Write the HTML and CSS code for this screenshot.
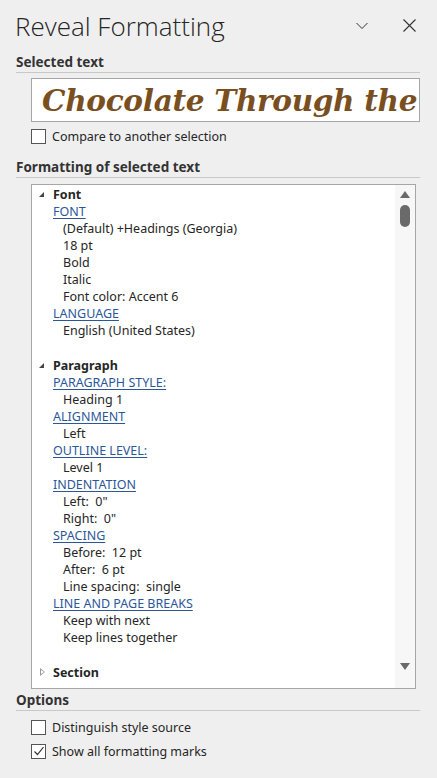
FILE: index.html
```html
<!DOCTYPE html>
<html lang="en">
<head>
    <meta charset="UTF-8">
    <meta name="viewport" content="width=device-width, initial-scale=1.0">
    <title>Reveal Formatting</title>
    <link rel="stylesheet" href="styles.css">
</head>
<body>
    <div class="pane">
        <div class="pane-header">
            <h1>Reveal Formatting</h1>
            <div class="pane-actions">
                <button class="icon-btn" aria-label="Options">
                    <svg width="12" height="8" viewBox="0 0 12 8"><path d="M0.5 1 L6 6.5 L11.5 1" fill="none" stroke="#333" stroke-width="1"/></svg>
                </button>
                <button class="icon-btn" aria-label="Close">
                    <svg width="13" height="13" viewBox="0 0 13 13"><path d="M0.5 0.5 L12.5 12.5 M12.5 0.5 L0.5 12.5" fill="none" stroke="#333" stroke-width="1.1"/></svg>
                </button>
            </div>
        </div>

        <h2 class="section-title">Selected text</h2>
        <div class="sample-box">
            <div class="sample-text">Chocolate Through the Years</div>
        </div>
        <label class="check">
            <span class="box"></span>
            Compare to another selection
        </label>

        <h2 class="section-title">Formatting of selected text</h2>
        <div class="tree-box">
            <div class="tree">
                <div class="group open">Font</div>
                <a class="prop" href="#">FONT</a>
                <div class="val">(Default) +Headings (Georgia)</div>
                <div class="val">18 pt</div>
                <div class="val">Bold</div>
                <div class="val">Italic</div>
                <div class="val">Font color: Accent 6</div>
                <a class="prop" href="#">LANGUAGE</a>
                <div class="val">English (United States)</div>
                <div class="blank"></div>

                <div class="group open">Paragraph</div>
                <a class="prop" href="#">PARAGRAPH STYLE:</a>
                <div class="val">Heading 1</div>
                <a class="prop" href="#">ALIGNMENT</a>
                <div class="val">Left</div>
                <a class="prop" href="#">OUTLINE LEVEL:</a>
                <div class="val">Level 1</div>
                <a class="prop" href="#">INDENTATION</a>
                <div class="val">Left:&nbsp; 0"</div>
                <div class="val">Right:&nbsp; 0"</div>
                <a class="prop" href="#">SPACING</a>
                <div class="val">Before:&nbsp; 12 pt</div>
                <div class="val">After:&nbsp; 6 pt</div>
                <div class="val">Line spacing:&nbsp; single</div>
                <a class="prop" href="#">LINE AND PAGE BREAKS</a>
                <div class="val">Keep with next</div>
                <div class="val">Keep lines together</div>
                <div class="blank"></div>

                <div class="group closed">Section</div>
            </div>
            <div class="scrollbar">
                <span class="arrow up"></span>
                <span class="thumb"></span>
                <span class="track"></span>
                <span class="arrow down"></span>
            </div>
        </div>

        <h2 class="section-title">Options</h2>
        <label class="check">
            <span class="box"></span>
            Distinguish style source
        </label>
        <label class="check">
            <span class="box checked">
                <svg width="12" height="12" viewBox="0 0 12 12"><path d="M1.5 6.5 L4.5 9.5 L10.5 2" fill="none" stroke="#333" stroke-width="1.2"/></svg>
            </span>
            Show all formatting marks
        </label>
    </div>
</body>
</html>
```

FILE: styles.css
```css
body {
    margin: 0;
    padding: 0;
    background-color: #efefef;
    font-family: "Noto Sans", "Open Sans", sans-serif;
    font-size: 12.5px;
    color: #262626;
}

.pane {
    padding: 0 17px 0 16px;
}

.pane-header {
    display: flex;
    align-items: center;
    justify-content: space-between;
    height: 51px;
}

.pane-header h1 {
    margin: 0 0 0 -1px;
    font-family: "Open Sans", "Noto Sans", sans-serif;
    font-weight: 300;
    font-size: 26px;
    color: #262626;
}

.pane-actions {
    display: flex;
    align-items: center;
    gap: 35px;
    margin-right: 4px;
}

.icon-btn {
    border: none;
    background: none;
    padding: 0;
    display: flex;
}

.section-title {
    margin: 2px 0 0;
    font-size: 13.5px;
    font-weight: bold;
    color: #333;
    border-bottom: 1px solid #c8c8c8;
    line-height: 19px;
}

.sample-box {
    margin: 5px 0 0 15px;
    height: 42px;
    background: #fff;
    border: 1px solid #a6a6a6;
    overflow: hidden;
    white-space: nowrap;
}

.sample-text {
    padding-left: 10px;
    font-family: "DejaVu Serif", Georgia, serif;
    font-weight: bold;
    font-style: italic;
    font-size: 29.5px;
    letter-spacing: -0.3px;
    line-height: 43px;
    color: #7a4f1f;
}

.check {
    display: flex;
    align-items: center;
    gap: 6px;
    margin: 2px 0 0 15px;
    height: 24px;
}

.section-title + .check {
    margin-top: 4px;
}

.check + .check {
    margin-top: 0;
}

.box {
    width: 13px;
    height: 13px;
    border: 1px solid #555;
    background: #fff;
    display: flex;
    align-items: center;
    justify-content: center;
}

.check + .section-title {
    margin-top: 10px;
}

.tree-box {
    display: flex;
    margin: 6px 4px 0 15px;
    height: 503px;
    border: 1px solid #a6a6a6;
    background: #fff;
}

.tree {
    flex: 1;
    padding: 1px 0 0 6px;
    line-height: 17px;
    overflow: hidden;
}

.tree .group {
    position: relative;
    padding-left: 15px;
    font-weight: bold;
}

.tree .group::before {
    content: "";
    position: absolute;
    left: 1px;
    top: 6px;
}

.tree .group.open::before {
    border-left: 5px solid transparent;
    border-bottom: 5px solid #444;
}

.tree .group.closed::before {
    top: 4px;
    left: 2px;
    width: 0;
    height: 0;
    border-top: 4px solid transparent;
    border-bottom: 4px solid transparent;
    border-left: 5px solid #9a9a9a;
}

.tree .group.closed::after {
    content: "";
    position: absolute;
    left: 3px;
    top: 6px;
    border-top: 2px solid transparent;
    border-bottom: 2px solid transparent;
    border-left: 3px solid #fff;
}

.tree .prop {
    display: block;
    padding-left: 15px;
    color: #2b579a;
    text-decoration: underline;
    text-underline-offset: 2px;
}

.tree .val {
    padding-left: 25px;
}

.tree .blank {
    height: 18px;
}

.scrollbar {
    width: 20px;
    display: flex;
    flex-direction: column;
    align-items: center;
    background: #f7f7f7;
    padding: 6px 0 4px;
}

.scrollbar .arrow {
    width: 0;
    height: 0;
    border-left: 5px solid transparent;
    border-right: 5px solid transparent;
}

.scrollbar .up {
    border-bottom: 7px solid #6a6a6a;
}

.scrollbar .down {
    border-top: 7px solid #6a6a6a;
    margin-bottom: 14px;
}

.scrollbar .thumb {
    width: 10px;
    height: 22px;
    margin-top: 7px;
    border-radius: 5px;
    background: #6a6a6a;
}

.scrollbar .track {
    flex: 1;
}
```
